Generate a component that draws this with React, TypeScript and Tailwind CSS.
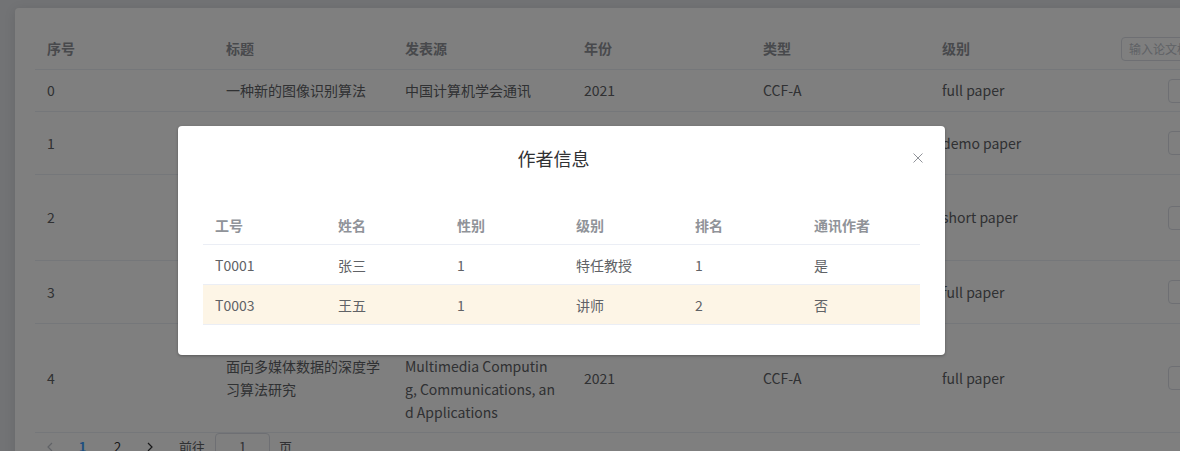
import React from "react";

type Row = {
  id: string;
  title: React.ReactNode;
  source: React.ReactNode;
  year: string;
  type: string;
  level: string;
  h: string;
};

const rows: Row[] = [
  { id: "0", title: "一种新的图像识别算法", source: "中国计算机学会通讯", year: "2021", type: "CCF-A", level: "full paper", h: "h-[42px]" },
  { id: "1", title: "基于深度学习的目标检测", source: "计算机学报", year: "2021", type: "CCF-A", level: "demo paper", h: "h-[63px]" },
  { id: "2", title: "面向大规模图数据的查询优化", source: "软件学报", year: "2020", type: "CCF-B", level: "short paper", h: "h-[86px]" },
  { id: "3", title: "一种改进的自然语言处理模型", source: "计算机研究与发展", year: "2020", type: "CCF-A", level: "full paper", h: "h-[63px]" },
  {
    id: "4",
    title: (
      <>
        面向多媒体数据的深度学
        <br />
        习算法研究
      </>
    ),
    source: (
      <>
        ACM Transactions on
        <br />
        Multimedia Computin
        <br />
        g, Communications, an
        <br />
        d Applications
      </>
    ),
    year: "2021",
    type: "CCF-A",
    level: "full paper",
    h: "h-[109px]",
  },
];

const authors = [
  { no: "T0001", name: "张三", sex: "1", level: "特任教授", rank: "1", corr: "是", hl: false },
  { no: "T0003", name: "王五", sex: "1", level: "讲师", rank: "2", corr: "否", hl: true },
];

export default function App() {
  return (
    <div className="relative w-[1180px] h-[451px] overflow-hidden bg-[#e4e6ea] font-['Noto_Sans_CJK_SC','Noto_Sans',sans-serif] text-sm">
      {/* Page card */}
      <div className="ml-[15px] mt-[8px] w-[1320px] rounded bg-white shadow-[0_2px_12px_0_rgba(0,0,0,0.1)] px-[20px] pt-[20px] pb-[20px]">
        {/* header */}
        <div className="grid grid-cols-[179px_179px_179px_179px_179px_179px_240px] h-[42px] items-center border-b border-[#ebeef5] text-[#909399] font-bold leading-[23px]">
          <div className="px-3">序号</div>
          <div className="px-3">标题</div>
          <div className="px-3">发表源</div>
          <div className="px-3">年份</div>
          <div className="px-3">类型</div>
          <div className="px-3">级别</div>
          <div className="px-3 font-normal">
            <div className="h-[24px] w-[200px] rounded border border-[#dcdfe6] pl-[7px] text-xs leading-[22px] text-[#c0c4cc]">
              输入论文标题搜索
            </div>
          </div>
        </div>
        {rows.map((r) => (
          <div
            key={r.id}
            className={`grid grid-cols-[179px_179px_179px_179px_179px_179px_240px] ${r.h} items-center border-b border-[#ebeef5] text-[#606266] leading-[23px]`}
          >
            <div className="px-3">{r.id}</div>
            <div className="px-3 break-all">{r.title}</div>
            <div className="px-3 break-all">{r.source}</div>
            <div className="px-3">{r.year}</div>
            <div className="px-3">{r.type}</div>
            <div className="px-3">{r.level}</div>
            <div className="pl-[59px] flex gap-2">
              <div className="h-[24px] rounded border border-[#dcdfe6] px-3 text-xs leading-[22px] text-[#606266]">作者信息</div>
              <div className="h-[24px] rounded border border-[#dcdfe6] px-3 text-xs leading-[22px] text-[#606266]">编辑</div>
            </div>
          </div>
        ))}
        {/* pagination */}
        <div className="flex h-[28px] items-center text-[13px] text-[#303133]">
          <div className="flex w-[30px] justify-center text-[#c0c4cc]">
            <svg width="8" height="10" viewBox="0 0 8 10" fill="none">
              <path d="M6 1 L2 5 L6 9" stroke="currentColor" strokeWidth="1.2" />
            </svg>
          </div>
          <div className="w-[35px] text-center font-bold text-[#409eff]">1</div>
          <div className="w-[35px] text-center">2</div>
          <div className="flex w-[30px] justify-center">
            <svg width="8" height="10" viewBox="0 0 8 10" fill="none">
              <path d="M2 1 L6 5 L2 9" stroke="currentColor" strokeWidth="1.2" />
            </svg>
          </div>
          <span className="ml-[14px] text-[#606266]">前往</span>
          <div className="ml-[10px] h-[28px] w-[55px] rounded border border-[#dcdfe6] text-center leading-[26px] text-[#606266]">1</div>
          <span className="ml-[9px] text-[#606266]">页</span>
        </div>
      </div>

      {/* overlay */}
      <div className="absolute inset-0 bg-black/50" />

      {/* dialog */}
      <div className="absolute left-[178px] top-[126px] w-[767px] h-[229px] rounded-sm bg-white shadow-[0_1px_3px_rgba(0,0,0,0.3)]">
        <div className="pt-[20px] pl-[20px] pr-[36px] text-center text-[18px] leading-[24px] text-[#303133]">作者信息</div>
        <div className="absolute right-[22px] top-[27px] text-[#909399]">
          <svg width="10" height="10" viewBox="0 0 10 10" fill="none">
            <path d="M0.5 0.5 L9.5 9.5 M9.5 0.5 L0.5 9.5" stroke="currentColor" strokeWidth="1" />
          </svg>
        </div>
        <div className="mx-[25px] mt-[35px]">
          <div className="grid grid-cols-[123px_119px_119px_119px_119px_1fr] h-[40px] items-center border-b border-[#ebeef5] font-bold text-[#909399]">
            <div className="px-3">工号</div>
            <div className="px-3">姓名</div>
            <div className="px-3">性别</div>
            <div className="px-3">级别</div>
            <div className="px-3">排名</div>
            <div className="px-3">通讯作者</div>
          </div>
          {authors.map((a) => (
            <div
              key={a.no}
              className={`grid grid-cols-[123px_119px_119px_119px_119px_1fr] h-[40px] items-center border-b border-[#ebeef5] text-[#606266] ${a.hl ? "bg-[#fdf5e6]" : "bg-white"}`}
            >
              <div className="px-3">{a.no}</div>
              <div className="px-3">{a.name}</div>
              <div className="px-3">{a.sex}</div>
              <div className="px-3">{a.level}</div>
              <div className="px-3">{a.rank}</div>
              <div className="px-3">{a.corr}</div>
            </div>
          ))}
        </div>
      </div>
    </div>
  );
}
